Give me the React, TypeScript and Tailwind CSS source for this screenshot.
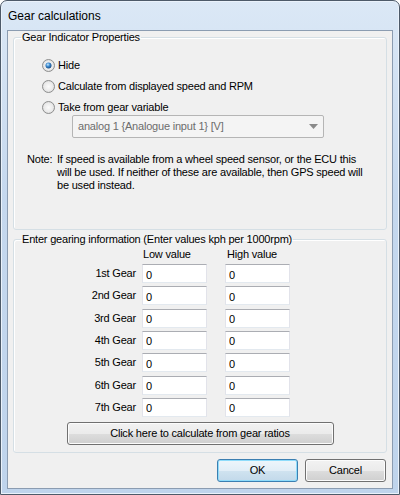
import { useId } from "react";

const gears = ["1st Gear", "2nd Gear", "3rd Gear", "4th Gear", "5th Gear", "6th Gear", "7th Gear"];

// Win7 style radio button
function Radio({ checked }: { checked?: boolean }) {
    const id = useId().replace(/:/g, "");
    return (
        <svg width="13" height="13" viewBox="0 0 13 13" className="shrink-0">
            <defs>
                <radialGradient id={`rg${id}`} cx="50%" cy="50%" r="55%">
                    <stop offset="0%" stopColor="#fbfbfb" />
                    <stop offset="70%" stopColor="#e9e9e9" />
                    <stop offset="100%" stopColor="#cfcfcf" />
                </radialGradient>
                <radialGradient id={`dot${id}`} cx="40%" cy="35%" r="70%">
                    <stop offset="0%" stopColor="#c9eafd" />
                    <stop offset="45%" stopColor="#3d8ad0" />
                    <stop offset="100%" stopColor="#16457a" />
                </radialGradient>
            </defs>
            <circle cx="6.5" cy="6.5" r="6" fill={`url(#rg${id})`} stroke="#8e8f8f" strokeWidth="1" />
            {checked && <circle cx="6.5" cy="6.5" r="3" fill={`url(#dot${id})`} />}
        </svg>
    );
}

function WinButton({ label, className, isDefault }: { label: string; className: string; isDefault?: boolean }) {
    return (
        <button
            className={
                isDefault
                    ? `${className} rounded-[3px] border border-[#3c7fb1] bg-[linear-gradient(#eef6fb_0%,#e2eef7_50%,#d0e3f0_51%,#c2d9ea_100%)] shadow-[inset_0_0_0_1px_#8fdcfb] text-black`
                    : `${className} rounded-[3px] border border-[#707070] bg-[linear-gradient(#f2f2f2_0%,#ebebeb_50%,#dddddd_51%,#cfcfcf_100%)] shadow-[inset_0_0_0_1px_#fcfcfc] text-black`
            }
        >
            {label}
        </button>
    );
}

export default function App() {
    return (
        <div className="w-[400px] h-[495px] flex flex-col border border-[#4d5a69] rounded-t-[7px] bg-[linear-gradient(#dbe8f6,#c5d8ee_40%,#bfd4ec)] shadow-[inset_0_0_0_1px_#eaf2fb] font-['Liberation_Sans',Arial,sans-serif] text-black overflow-hidden">
            {/* Title bar */}
            <div className="h-[29px] shrink-0 flex items-center pl-[7px] text-[12px] text-black">
                Gear calculations
            </div>

            {/* Client area */}
            <div className="mx-[6px] h-[459px] shrink-0 border border-[#8b9cb1] bg-[#f0f0f0] px-[5px] text-[11px] tracking-[-0.2px] leading-[13px]">
                {/* Gear Indicator Properties */}
                <fieldset className="h-[199px] border border-[#d5dfe5] rounded-[3px] shadow-[inset_1px_1px_0_#ffffff]">
                    <legend className="ml-[7px] px-[1px] leading-[13px]">Gear Indicator Properties</legend>

                    <div className="mt-[13px] ml-[28px] flex flex-col gap-[5px]">
                        <label className="h-[16px] flex items-center gap-[3px]">
                            <Radio checked />
                            <span>Hide</span>
                        </label>
                        <label className="h-[16px] flex items-center gap-[3px]">
                            <Radio />
                            <span>Calculate from displayed speed and RPM</span>
                        </label>
                        <label className="h-[16px] flex items-center gap-[3px]">
                            <Radio />
                            <span>Take from gear variable</span>
                        </label>
                    </div>

                    <div className="ml-[58px] w-[252px] h-[23px] flex items-center justify-between border border-[#b5b5b5] rounded-[2px] bg-[#f4f4f4] pl-[5px] pr-[5px] text-[#6d6d6d]">
                        <span>analog 1 {"{"}Analogue input 1{"}"} [V]</span>
                        <svg width="9" height="5" viewBox="0 0 9 5">
                            <path d="M0 0 H9 L4.5 5 Z" fill="#8a8a8a" />
                        </svg>
                    </div>

                    <div className="mt-[15px] ml-[13px] flex">
                        <span className="w-[30px] shrink-0">Note:</span>
                        <p>
                            If speed is available from a wheel speed sensor, or the ECU this
                            <br />
                            will be used. If neither of these are available, then GPS speed will
                            <br />
                            be used instead.
                        </p>
                    </div>
                </fieldset>

                {/* Gearing information */}
                <fieldset className="mt-[3px] h-[220px] border border-[#d5dfe5] rounded-[3px] shadow-[inset_1px_1px_0_#ffffff]">
                    <legend className="ml-[7px] px-[1px] leading-[13px]">
                        Enter gearing information (Enter values kph per 1000rpm)
                    </legend>

                    <div className="mt-[2px] h-[13px] flex">
                        <div className="w-[128px] shrink-0" />
                        <div className="w-[83px] shrink-0 pl-[1px]">Low value</div>
                        <div className="pl-[2px]">High value</div>
                    </div>

                    <div className="mt-[3px] flex flex-col gap-[3.33px]">
                        {gears.map(gear => (
                            <div key={gear} className="h-[19px] flex items-center">
                                <div className="w-[122px] shrink-0 text-right">{gear}</div>
                                <input
                                    readOnly
                                    defaultValue="0"
                                    className="ml-[6px] w-[65px] h-[19px] bg-white border border-[#e2e3ea] border-t-[#abadb3] border-b-[#e3e9ef] pl-[3px] pt-[2px] outline-none"
                                />
                                <input
                                    readOnly
                                    defaultValue="0"
                                    className="ml-[18px] w-[65px] h-[19px] bg-white border border-[#e2e3ea] border-t-[#abadb3] border-b-[#e3e9ef] pl-[3px] pt-[2px] outline-none"
                                />
                            </div>
                        ))}
                    </div>

                    <div className="mt-[5px] flex justify-center">
                        <WinButton label="Click here to calculate from gear ratios" className="w-[267px] h-[23px]" />
                    </div>
                </fieldset>

                {/* Dialog buttons */}
                <div className="mt-[6px] flex justify-end gap-[7px] pr-[1px]">
                    <WinButton label="OK" className="w-[81px] h-[23px]" isDefault />
                    <WinButton label="Cancel" className="w-[81px] h-[23px]" />
                </div>
            </div>
        </div>
    );
}
